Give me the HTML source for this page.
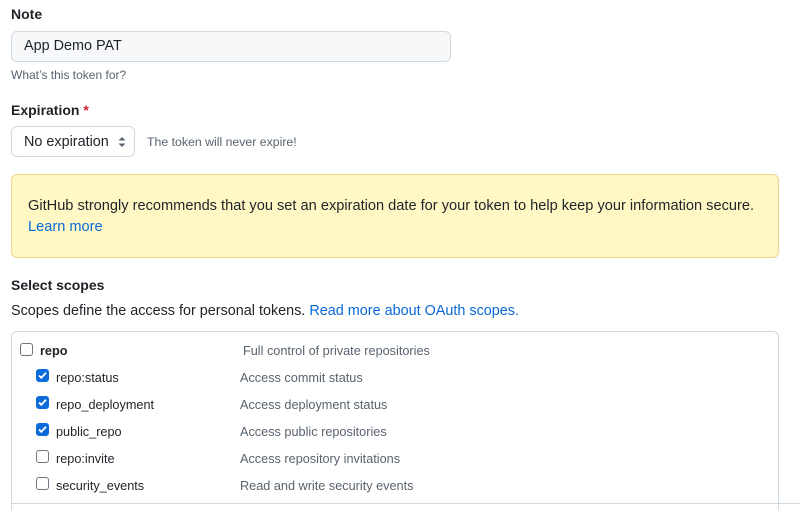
<!DOCTYPE html>
<html><head><meta charset="utf-8"><style>
*{box-sizing:border-box;margin:0;padding:0}
html,body{width:800px;height:510px;overflow:hidden}
body{background:#fff;font-family:"Liberation Sans",Arial,sans-serif;color:#1f2328;position:relative}
.a{position:absolute;white-space:nowrap}
.b{font-weight:bold;font-size:14px}
.s{font-size:12px;color:#59636e}
.lnk{color:#0969da}
.cb{position:absolute;width:13px;height:13px;border:1px solid #6e7781;border-radius:3px;background:#fff}
.cb.on{background:#0b6bdb;border-color:#0b6bdb}
.cb.on svg{position:absolute;left:0px;top:0px}
.r{font-size:12.7px}
</style></head><body>
<div class="a b" style="left:11px;top:6px">Note</div>
<div class="a" style="left:11px;top:31px;width:440px;height:31px;border:1px solid #d1d9e0;border-radius:6px;background:#f6f8fa"></div>
<div class="a" style="left:24px;top:38px;font-size:14.4px">App Demo PAT</div>
<div class="a s" style="left:11px;top:68px">What’s this token for?</div>
<div class="a b" style="left:11px;top:102px">Expiration <span style="color:#cf222e">*</span></div>
<div class="a" style="left:11px;top:126px;width:124px;height:31px;border:1px solid #d1d9e0;border-radius:6px;background:#fff"></div>
<div class="a" style="left:24px;top:134px;font-size:14.4px">No expiration</div>
<svg class="a" style="left:117px;top:135px" width="10" height="14" viewBox="0 0 10 14"><path d="M1.5 5.5L5 2l3.5 3.5z M1.5 8.5L5 12l3.5-3.5z" fill="#59636e"/></svg>
<div class="a" style="left:147px;top:135px;font-size:12.3px;color:#59636e">The token will never expire!</div>
<div class="a" style="left:11px;top:174px;width:768px;height:84px;border:1px solid #ecd58a;border-radius:6px;background:#fff8c5"></div>
<div class="a" style="left:28px;top:198px;font-size:14.6px">GitHub strongly recommends that you set an expiration date for your token to help keep your information secure.</div>
<div class="a lnk" style="left:28px;top:219px;font-size:14.6px">Learn more</div>
<div class="a b" style="left:11px;top:277px">Select scopes</div>
<div class="a" style="left:11px;top:303px;font-size:14.4px">Scopes define the access for personal tokens. <span class="lnk">Read more about OAuth scopes.</span></div>
<div class="a" style="left:11px;top:331px;width:768px;height:200px;border:1px solid #d1d9e0;border-radius:6px"></div>
<div class="a" style="left:11px;top:503px;width:789px;height:1px;background:#d1d9e0"></div>
<div class="cb" style="left:20px;top:343px"></div>
<div class="a r" style="left:40px;top:344px;font-weight:bold">repo</div>
<div class="a r" style="left:243px;top:344px;color:#59636e">Full control of private repositories</div>

<div class="cb on" style="left:36px;top:369px"><svg width="11" height="11" viewBox="0 0 11 11"><path d="M2 5.5l2.3 2.3L9 2.8" stroke="#fff" stroke-width="1.8" fill="none"/></svg></div>
<div class="a r" style="left:56px;top:371px">repo:status</div>
<div class="a r" style="left:240px;top:371px;color:#59636e">Access commit status</div>

<div class="cb on" style="left:36px;top:396px"><svg width="11" height="11" viewBox="0 0 11 11"><path d="M2 5.5l2.3 2.3L9 2.8" stroke="#fff" stroke-width="1.8" fill="none"/></svg></div>
<div class="a r" style="left:56px;top:398px">repo_deployment</div>
<div class="a r" style="left:240px;top:398px;color:#59636e">Access deployment status</div>

<div class="cb on" style="left:36px;top:423px"><svg width="11" height="11" viewBox="0 0 11 11"><path d="M2 5.5l2.3 2.3L9 2.8" stroke="#fff" stroke-width="1.8" fill="none"/></svg></div>
<div class="a r" style="left:56px;top:425px">public_repo</div>
<div class="a r" style="left:240px;top:425px;color:#59636e">Access public repositories</div>

<div class="cb" style="left:36px;top:450px"></div>
<div class="a r" style="left:56px;top:452px">repo:invite</div>
<div class="a r" style="left:240px;top:452px;color:#59636e">Access repository invitations</div>

<div class="cb" style="left:36px;top:477px"></div>
<div class="a r" style="left:56px;top:479px">security_events</div>
<div class="a r" style="left:240px;top:479px;color:#59636e">Read and write security events</div>
</body></html>
